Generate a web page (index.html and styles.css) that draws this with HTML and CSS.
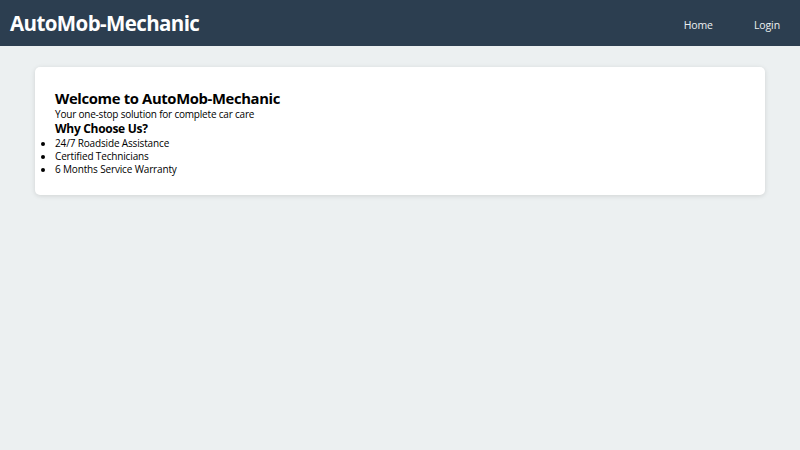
FILE: index.html
```html
<!DOCTYPE html>
<html lang="en">
<head>
<meta charset="utf-8">
<title>AutoMob-Mechanic</title>
<link rel="stylesheet" href="styles.css">
</head>
<body>
<header class="navbar">
  <h1 class="brand">AutoMob-Mechanic</h1>
  <nav class="nav">
    <a href="#" class="nav-link">Home</a>
    <a href="#" class="nav-link">Login</a>
  </nav>
</header>
<main class="main">
  <section class="card">
    <h2 class="card-title">Welcome to AutoMob-Mechanic</h2>
    <p class="card-sub">Your one-stop solution for complete car care</p>
    <h3 class="card-heading">Why Choose Us?</h3>
    <ul class="features">
      <li>24/7 Roadside Assistance</li>
      <li>Certified Technicians</li>
      <li>6 Months Service Warranty</li>
    </ul>
  </section>
</main>
</body>
</html>
```

FILE: styles.css
```css
html, body {
  margin: 0;
  padding: 0;
}
body {
  background: #ecf0f1;
  font-family: "Open Sans", "Noto Sans", sans-serif;
  color: #000;
  min-height: 450px;
}
.navbar {
  background: #2c3e50;
  height: 46px;
  display: flex;
  align-items: center;
  justify-content: space-between;
  padding: 0 20px 0 10px;
}
.brand {
  margin: 0;
  color: #fff;
  font-size: 20.5px;
  font-weight: 700;
  letter-spacing: -0.6px;
}
.nav {
  display: flex;
  gap: 41px;
  padding-top: 3px;
}
.nav-link {
  color: #ecf0f1;
  text-decoration: none;
  font-size: 10.5px;
  letter-spacing: -0.1px;
}
.main {
  padding: 21px 35px;
}
.card {
  background: #fff;
  border-radius: 5px;
  box-shadow: 0 1px 5px rgba(0,0,0,0.12);
  padding: 21px 20px 19px;
}
.card-title {
  margin: 0;
  font-size: 14.8px;
  line-height: 20px;
  font-weight: 700;
  letter-spacing: -0.35px;
}
.card-sub {
  margin: 0;
  font-size: 10px;
  line-height: 13px;
  letter-spacing: -0.2px;
}
.card-heading {
  margin: 0;
  font-size: 12px;
  line-height: 16px;
  font-weight: 700;
  letter-spacing: -0.3px;
}
.features {
  margin: 0;
  padding: 0;
  font-size: 10px;
  line-height: 13px;
  letter-spacing: -0.15px;
}
```
